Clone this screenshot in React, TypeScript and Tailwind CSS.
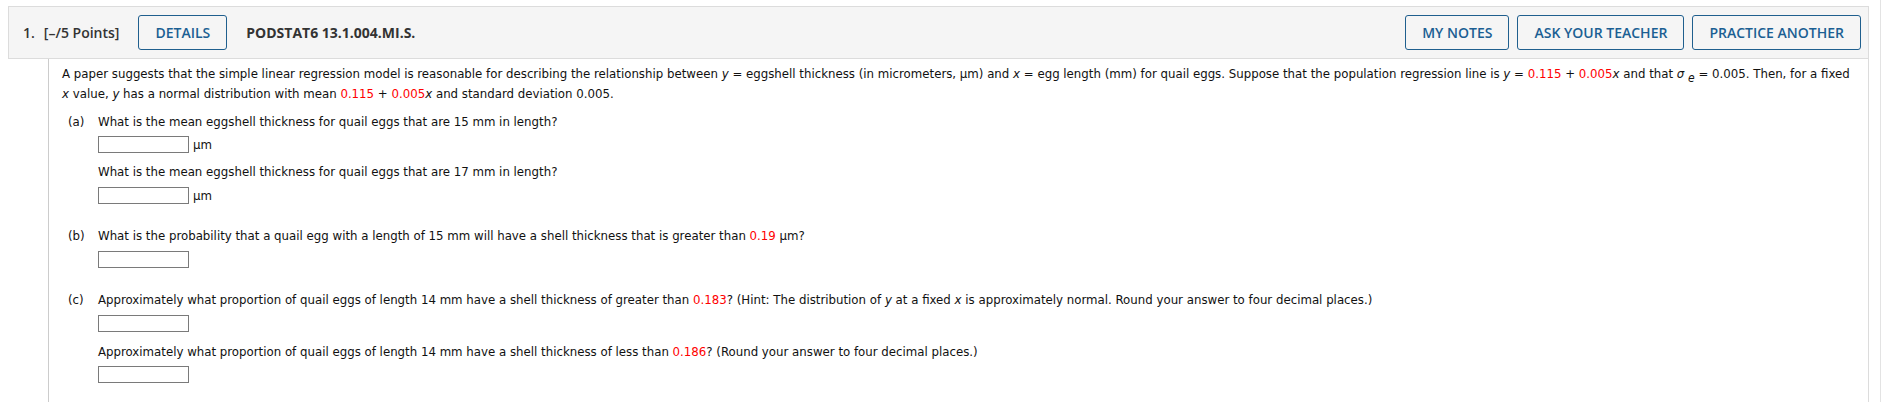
import React from 'react';

const body = { fontFamily: '"DejaVu Sans Condensed", "DejaVu Sans", Tahoma, sans-serif' };
const head = { fontFamily: '"Open Sans", "Noto Sans", sans-serif' };

function Red({ children }: { children: React.ReactNode }) {
  return <span className="text-[#ff0000]">{children}</span>;
}

function V({ children }: { children: React.ReactNode }) {
  return <i>{children}</i>;
}

function Box() {
  return <span className="inline-block w-[91px] h-[17px] border border-[#7a7a7a] bg-white align-middle"></span>;
}

function HeadButton({ label }: { label: string }) {
  return (
    <button className="h-[35px] px-[16px] rounded-[3px] border border-[#1f5f8e] text-[#1b5f93] text-[14px] font-semibold bg-transparent">
      {label}
    </button>
  );
}

export default function App() {
  return (
    <div className="w-[1885px] h-[402px] overflow-hidden bg-white">
      <div className="w-[1881px] h-[402px] border-r border-[#e3e3e3] pl-[8px] pr-[11px] pt-[6px]">
        {/* header bar */}
        <div style={head} className="h-[53px] flex items-center border border-[#dcdcdc] bg-[#f5f5f5] pl-[14px] pr-[7px] text-[#333] text-[14px] font-semibold">
          <span className="mr-[9px]">1.</span>
          <span className="mr-[19px]">[–/5 Points]</span>
          <HeadButton label="DETAILS" />
          <span className="ml-[19px] font-bold">PODSTAT6 13.1.004.MI.S.</span>
          <div className="ml-auto flex gap-[8px]">
            <HeadButton label="MY NOTES" />
            <HeadButton label="ASK YOUR TEACHER" />
            <HeadButton label="PRACTICE ANOTHER" />
          </div>
        </div>

        {/* question body */}
        <div
          style={body}
          className="ml-[40px] h-[343px] border-l border-[#cccccc] border-r border-r-[#dcdcdc] pl-[13px] pt-[5px] text-[13.1px] leading-[20px] text-[#111] font-stretch-condensed"
        >
          <p className="whitespace-nowrap">
            A paper suggests that the simple linear regression model is reasonable for describing the relationship between <V>y</V> = eggshell thickness (in micrometers, μm) and <V>x</V> = egg length (mm) for quail eggs. Suppose that the population regression line is <V>y</V> = <Red>0.115</Red> + <Red>0.005</Red><V>x</V> and that <V>σ</V>{' '}
            <span className="italic text-[12px] relative top-[4px]">e</span> = 0.005. Then, for a fixed
            <br />
            <V>x</V> value, <V>y</V> has a normal distribution with mean <Red>0.115</Red> + <Red>0.005</Red><V>x</V> and standard deviation 0.005.
          </p>

          <div className="flex mt-[8px] pl-[6px]">
            <span className="w-[30px] shrink-0">(a)</span>
            <div>
              <div>What is the mean eggshell thickness for quail eggs that are 15 mm in length?</div>
              <div className="mt-[4px] h-[17px] flex items-center gap-[4px]">
                <Box /> <span>μm</span>
              </div>
              <div className="mt-[9px]">What is the mean eggshell thickness for quail eggs that are 17 mm in length?</div>
              <div className="mt-[5px] h-[17px] flex items-center gap-[4px]">
                <Box /> <span>μm</span>
              </div>
            </div>
          </div>

          <div className="flex mt-[22px] pl-[6px]">
            <span className="w-[30px] shrink-0">(b)</span>
            <div>
              <div>
                What is the probability that a quail egg with a length of 15 mm will have a shell thickness that is greater than <Red>0.19</Red> μm?
              </div>
              <div className="mt-[5px] h-[17px] flex items-center">
                <Box />
              </div>
            </div>
          </div>

          <div className="flex mt-[22px] pl-[6px]">
            <span className="w-[30px] shrink-0">(c)</span>
            <div>
              <div>
                Approximately what proportion of quail eggs of length 14 mm have a shell thickness of greater than <Red>0.183</Red>? (Hint: The distribution of <V>y</V> at a fixed <V>x</V> is approximately normal. Round your answer to four decimal places.)
              </div>
              <div className="mt-[5px] h-[17px] flex items-center">
                <Box />
              </div>
              <div className="mt-[10px]">
                Approximately what proportion of quail eggs of length 14 mm have a shell thickness of less than <Red>0.186</Red>? (Round your answer to four decimal places.)
              </div>
              <div className="mt-[4px] h-[17px] flex items-center">
                <Box />
              </div>
            </div>
          </div>
        </div>
      </div>
    </div>
  );
}
